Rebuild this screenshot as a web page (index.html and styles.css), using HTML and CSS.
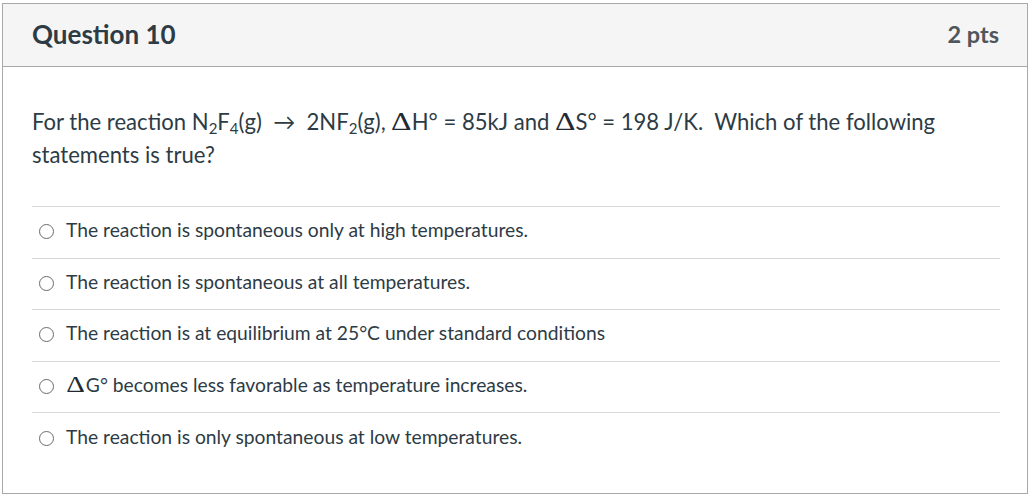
FILE: index.html
```html
<!DOCTYPE html>
<html>
<head>
<meta charset="utf-8">
<link rel="stylesheet" href="styles.css">
</head>
<body>
<div class="quiz">
  <div class="header">
    <h2 class="title">Question 10</h2>
    <div class="pts">2 pts</div>
  </div>
  <div class="content">
    <p class="question">For the reaction N<sub>2</sub>F<sub>4</sub>(g) &nbsp;→ &nbsp;2NF<sub>2</sub>(g), <span class="delta">Δ</span>H° = 85kJ and <span class="delta">Δ</span>S° = 198 J/K.&nbsp; Which of the following statements is true?</p>
    <div class="answers">
      <label class="answer"><span class="radio"></span><span class="txt">The reaction is spontaneous only at high temperatures.</span></label>
      <label class="answer"><span class="radio"></span><span class="txt">The reaction is spontaneous at all temperatures.</span></label>
      <label class="answer"><span class="radio"></span><span class="txt">The reaction is at equilibrium at 25°C under standard conditions</span></label>
      <label class="answer"><span class="radio"></span><span class="txt"><span class="delta">Δ</span>G° becomes less favorable as temperature increases.</span></label>
      <label class="answer"><span class="radio"></span><span class="txt">The reaction is only spontaneous at low temperatures.</span></label>
    </div>
  </div>
</div>
</body>
</html>
```

FILE: styles.css
```css
* { box-sizing: border-box; }
html, body { margin: 0; padding: 0; background: #fff; }
body {
  font-family: Lato, "Liberation Sans", sans-serif;
  color: #2d3b45;
  padding: 3px 2px 0 2px;
}
.quiz {
  width: 1026px;
  height: 491px;
  border: 1px solid #a8a8a8;
  display: flex;
  flex-direction: column;
}
.header {
  height: 63px;
  background: #f5f5f5;
  border-bottom: 1px solid #a8a8a8;
  display: flex;
  align-items: center;
  justify-content: space-between;
  padding: 0 28px 3px 29px;
}
.title {
  margin: 0;
  font-size: 26px;
  font-weight: 700;
  color: #2d3b45;
}
.pts {
  font-size: 23.5px;
  font-weight: 700;
  color: #50565c;
}
.content {
  padding: 38px 27px 0 29px;
}
.question {
  margin: 0;
  font-size: 22.1px;
  line-height: 33px;
}
.question sub {
  font-size: 15px;
  vertical-align: -4px;
  line-height: 0;
}
.delta {
  font-family: "Liberation Serif", serif;
  font-size: 1.15em;
  display: inline-block;
  line-height: 1;
  transform: scaleX(1.25);
  margin: 0 2px;
  color: #1f2a33;
}
.answers {
  margin-top: 35px;
}
.answer {
  display: flex;
  align-items: center;
  height: 51.6px;
  border-top: 1px solid #d8d8d8;
  padding: 0 0 5px 7px;
  font-size: 19.25px;
}
.answer .delta {
  font-size: 1.2em;
  margin: 0 3px 0 2px;
}
.radio {
  width: 15px;
  height: 15px;
  border: 1px solid #6b6b6b;
  border-radius: 50%;
  margin: 4px 12px 0 0;
  flex: none;
}
```
